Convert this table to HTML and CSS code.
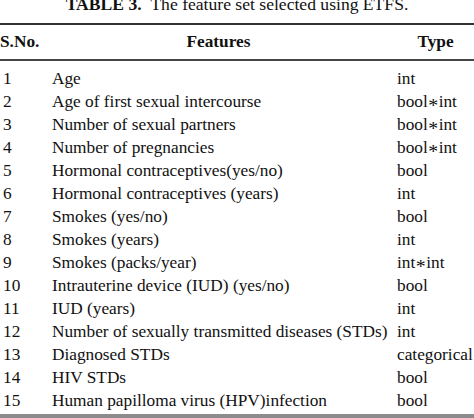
FILE: index.html
```html
<!DOCTYPE html>
<html>
<head>
<meta charset="utf-8">
<link rel="stylesheet" href="styles.css">
</head>
<body>
<div class="page">
  <p class="caption"><b>TABLE 3.</b>&nbsp;&nbsp;The feature set selected using ETFS.</p>
  <div class="table">
    <div class="row head">
      <div class="c-no">S.No.</div>
      <div class="c-feat">Features</div>
      <div class="c-type">Type</div>
    </div>
    <div class="body">
      <div class="row"><div class="c-no">1</div><div class="c-feat">Age</div><div class="c-type">int</div></div>
      <div class="row"><div class="c-no">2</div><div class="c-feat">Age of first sexual intercourse</div><div class="c-type">bool<span class="ast">*</span>int</div></div>
      <div class="row"><div class="c-no">3</div><div class="c-feat">Number of sexual partners</div><div class="c-type">bool<span class="ast">*</span>int</div></div>
      <div class="row"><div class="c-no">4</div><div class="c-feat">Number of pregnancies</div><div class="c-type">bool<span class="ast">*</span>int</div></div>
      <div class="row"><div class="c-no">5</div><div class="c-feat">Hormonal contraceptives(yes/no)</div><div class="c-type">bool</div></div>
      <div class="row"><div class="c-no">6</div><div class="c-feat">Hormonal contraceptives (years)</div><div class="c-type">int</div></div>
      <div class="row"><div class="c-no">7</div><div class="c-feat">Smokes (yes/no)</div><div class="c-type">bool</div></div>
      <div class="row"><div class="c-no">8</div><div class="c-feat">Smokes (years)</div><div class="c-type">int</div></div>
      <div class="row"><div class="c-no">9</div><div class="c-feat">Smokes (packs/year)</div><div class="c-type">int<span class="ast">*</span>int</div></div>
      <div class="row"><div class="c-no">10</div><div class="c-feat">Intrauterine device (IUD) (yes/no)</div><div class="c-type">bool</div></div>
      <div class="row"><div class="c-no">11</div><div class="c-feat">IUD (years)</div><div class="c-type">int</div></div>
      <div class="row"><div class="c-no">12</div><div class="c-feat">Number of sexually transmitted diseases (STDs)</div><div class="c-type">int</div></div>
      <div class="row"><div class="c-no">13</div><div class="c-feat">Diagnosed STDs</div><div class="c-type">categorical</div></div>
      <div class="row"><div class="c-no">14</div><div class="c-feat">HIV STDs</div><div class="c-type">bool</div></div>
      <div class="row"><div class="c-no">15</div><div class="c-feat">Human papilloma virus (HPV)infection</div><div class="c-type">bool</div></div>
    </div>
  </div>
</div>
</body>
</html>
```
FILE: styles.css
```css
html, body {
  margin: 0;
  padding: 0;
  background: #fff;
}
body {
  width: 474px;
  height: 418px;
  overflow: hidden;
  font-family: "Liberation Serif", "Times New Roman", serif;
  font-size: 17.3px;
  color: #111;
}
.page {
  margin-top: -8px;
}
.caption {
  margin: 0;
  height: 31px;
  line-height: 24px;
  text-align: center;
  white-space: nowrap;
  font-size: 17.6px;
}
.table {
  border-top: 2px solid #333;
  border-bottom: 4px solid #8c8c8c;
}
.row {
  display: grid;
  grid-template-columns: 52px 345px 1fr;
  height: 23px;
  line-height: 23px;
  white-space: nowrap;
}
.head {
  height: 34px;
  line-height: 34px;
  font-weight: bold;
  border-bottom: 2px solid #444;
}
.head .c-no { padding-left: 0; }
.head .c-feat { text-align: center; padding-right: 12px; }
.head .c-type { text-align: center; }
.body {
  padding: 6px 0 2px;
}
.c-no { padding-left: 3px; }
.c-type { overflow: visible; }
.ast {
  display: inline-block;
  line-height: 1;
  vertical-align: -0.24em;
  font-size: 1.15em;
  margin: 0 0.5px;
}
```
